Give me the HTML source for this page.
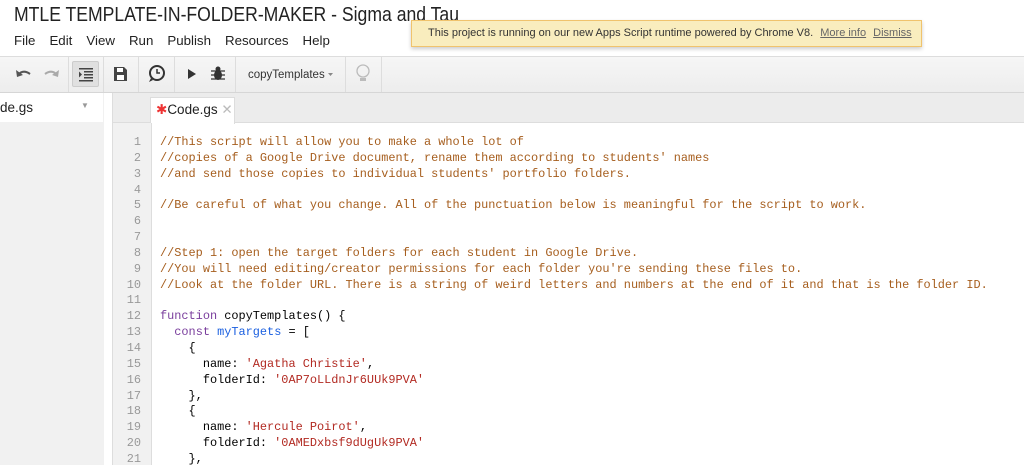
<!DOCTYPE html>
<html><head><meta charset="utf-8"><style>
*{margin:0;padding:0;box-sizing:border-box}
body{width:1024px;height:465px;overflow:hidden;background:#fff;font-family:"Liberation Sans",Arial,sans-serif;position:relative}
.abs{position:absolute}
.title{left:14px;top:4px;font-size:20px;color:#222;white-space:nowrap;transform:scaleX(0.88);transform-origin:0 0}
.menu{top:33px;left:14px;font-size:13.3px;color:#222;white-space:nowrap}
.menu span{margin-right:14px}
.notice{left:411px;top:20px;width:511px;height:27px;background:#f9edbe;border:1px solid #f0c36d;box-shadow:0 2px 4px rgba(0,0,0,.2);font-size:11px;color:#333;padding:6px 0 0 16px;white-space:nowrap}
.notice u{color:#666;margin-left:4px}
.toolbar{left:0;top:56px;width:1024px;height:37px;background:linear-gradient(#f6f6f6,#ededed);border-top:1px solid #ddd;border-bottom:1px solid #d6d6d6}
.sep{top:57px;width:1px;height:35px;background:#ddd}
.left{left:0;top:93px;width:104px;height:372px;background:#f1f1f1}
.file{left:0;top:93px;width:103px;height:29px;background:#fff;font-size:13.5px;color:#222;padding:7px 0 0 0}
.strip{left:104px;top:93px;width:9px;height:372px;background:#fff;border-right:1px solid #ddd}
.tabbar{left:113px;top:93px;width:911px;height:30px;background:#ececec;border-bottom:1px solid #ddd}
.tab{left:150px;top:97px;width:85px;height:27px;background:#fff;border:1px solid #ddd;border-bottom:none;font-size:13.5px;color:#222;padding:4px 0 0 5px;white-space:nowrap}
.gutter{left:113px;top:123px;width:39px;height:342px;background:#f1f1f1;border-right:1px solid #ddd}
.ln{font-family:"Liberation Mono",monospace;font-size:11.9px;color:#999;text-align:right;width:28px;left:113px;top:135px;line-height:15.85px;white-space:pre}
.code{font-family:"Liberation Mono",monospace;font-size:11.9px;left:160px;top:135px;line-height:15.85px;white-space:pre;color:#000}
.c{color:#a65e1e}.k{color:#7a3e9d}.v{color:#1a5fe0}.s{color:#b22a22}
</style></head><body>
<div class="abs title">MTLE TEMPLATE-IN-FOLDER-MAKER - Sigma and Tau</div>
<div class="abs menu"><span>File</span><span>Edit</span><span>View</span><span>Run</span><span>Publish</span><span>Resources</span><span>Help</span></div>
<div class="abs toolbar"></div>
<div class="abs sep" style="left:68px"></div>
<div class="abs sep" style="left:103px"></div>
<div class="abs sep" style="left:138px"></div>
<div class="abs sep" style="left:174px"></div>
<div class="abs sep" style="left:235px"></div>
<div class="abs sep" style="left:345px"></div>
<div class="abs sep" style="left:381px"></div>
<div class="abs" style="left:72px;top:61px;width:27px;height:26px;background:#e0e0e0;border:1px solid #ccc;border-radius:2px"></div>
<svg class="abs" style="left:0;top:57px" width="400" height="35">
<path d="M18 18 q5 -6 12 -1" stroke="#555" stroke-width="2" fill="none"/><path d="M16 13 l1 7 l6 -2z" fill="#555"/>
<path d="M57 18 q-5 -6 -12 -1" stroke="#aaa" stroke-width="2" fill="none"/><path d="M59 13 l-1 7 l-6 -2z" fill="#aaa"/>
<g fill="#444"><rect x="79" y="11" width="14" height="1.5"/><rect x="84" y="14" width="9" height="1.5"/><rect x="84" y="17" width="9" height="1.5"/><rect x="84" y="20" width="9" height="1.5"/><rect x="79" y="23" width="14" height="1.5"/><path d="M79 14.5 l3 3 l-3 3z"/></g>
<path d="M114 10 h10 l3 3 v11 h-13z" fill="#444"/><rect x="117" y="11" width="6" height="4" fill="#fff"/><rect x="117" y="18" width="7" height="5" fill="#fff"/>
<circle cx="157" cy="16" r="7" stroke="#333" stroke-width="2" fill="none"/><path d="M157 12 v4 h3" stroke="#333" stroke-width="1.5" fill="none"/><path d="M151 21 l-2 4 l4 -2z" fill="#333"/>
<path d="M188 12 l8 5 l-8 5z" fill="#333"/>
<g fill="#333"><ellipse cx="218" cy="18" rx="4" ry="5"/><circle cx="218" cy="12" r="2.5"/><path d="M211 14 h14 M211 18 h14 M211 22 h14" stroke="#333" stroke-width="1.2"/></g>
<text x="248" y="21" font-size="11.5" fill="#333" font-family="Liberation Sans">copyTemplates</text><path d="M328 16 h5 l-2.5 3z" fill="#888"/>
<circle cx="363" cy="14" r="6" stroke="#bbb" stroke-width="1.3" fill="none"/><rect x="360" y="21" width="6" height="3" fill="#bbb"/>
</svg>
<div class="abs left"></div>
<div class="abs file">de.gs<span style="position:absolute;left:81px;top:8px;font-size:8px;color:#999">▼</span></div>
<div class="abs strip"></div>
<div class="abs tabbar"></div>
<div class="abs tab"><span style="color:#e33">✱</span>Code.gs <span style="color:#bbb">✕</span></div>
<div class="abs gutter"></div>
<div class="abs ln">1
2
3
4
5
6
7
8
9
10
11
12
13
14
15
16
17
18
19
20
21</div>
<div class="abs code"><span class="c">//This script will allow you to make a whole lot of
//copies of a Google Drive document, rename them according to students' names
//and send those copies to individual students' portfolio folders.

//Be careful of what you change. All of the punctuation below is meaningful for the script to work.


//Step 1: open the target folders for each student in Google Drive.
//You will need editing/creator permissions for each folder you're sending these files to.
//Look at the folder URL. There is a string of weird letters and numbers at the end of it and that is the folder ID.</span>

<span class="k">function</span> copyTemplates() {
  <span class="k">const</span> <span class="v">myTargets</span> = [
    {
      name: <span class="s">'Agatha Christie'</span>,
      folderId: <span class="s">'0AP7oLLdnJr6UUk9PVA'</span>
    },
    {
      name: <span class="s">'Hercule Poirot'</span>,
      folderId: <span class="s">'0AMEDxbsf9dUgUk9PVA'</span>
    },</div>
<div class="abs notice">This project is running on our new Apps Script runtime powered by Chrome V8. <u>More info</u> <u>Dismiss</u></div>
</body></html>
